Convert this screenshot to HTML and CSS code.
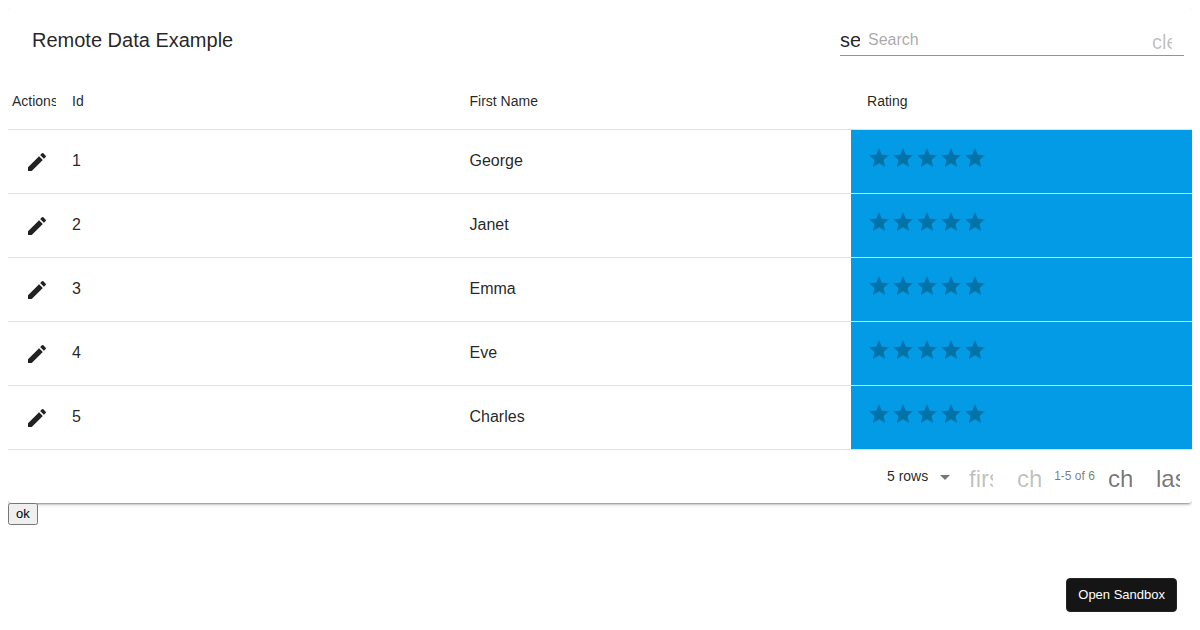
FILE: index.html
```
<!DOCTYPE html>
<html lang="en">
<head>
<meta charset="UTF-8" />
<meta name="viewport" content="width=device-width, initial-scale=1"/>
<title>Remote Data Example</title>
<link rel="stylesheet" href="styles.css">
</head>
<body>
  <!-- shared icons -->
  <svg class="sprite" aria-hidden="true">
    <symbol id="edit" viewBox="0 0 24 24">
      <path d="M3 17.25V21h3.75L17.81 9.94l-3.75-3.75L3 17.25zM20.71 7.04c.39-.39.39-1.02 0-1.41l-2.34-2.34a.9959.9959 0 0 0-1.41 0l-1.83 1.83 3.75 3.75 1.83-1.83z"/>
    </symbol>
    <symbol id="star" viewBox="0 0 24 24">
      <path d="M12 17.27L18.18 21l-1.64-7.03L22 9.24l-7.19-.61L12 2 9.19 8.63 2 9.24l5.46 4.73L5.82 21z"/>
    </symbol>
  </svg>

  <main class="paper">
    <div class="toolbar">
      <h1 class="title">Remote Data Example</h1>
      <div class="search">
        <span class="search-icon" aria-hidden="true">search</span>
        <input type="text" class="search-input" placeholder="Search" aria-label="Search">
        <button type="button" class="clear-btn" aria-label="Clear search" disabled><span class="clear-icon">clear</span></button>
      </div>
    </div>

    <table class="data-table">
      <colgroup>
        <col class="col-actions">
        <col>
        <col>
        <col class="col-rating">
      </colgroup>
      <thead>
        <tr>
          <th class="actions" scope="col">Actions</th>
          <th scope="col">Id</th>
          <th scope="col">First Name</th>
          <th scope="col">Rating</th>
        </tr>
      </thead>
      <tbody id="rows"></tbody>
    </table>

    <div class="pagination">
      <div class="rows-select">
        <select aria-label="Rows per page">
          <option>5 rows</option>
          <option>10 rows</option>
          <option>20 rows</option>
        </select>
        <svg class="arrow" viewBox="0 0 24 24" aria-hidden="true"><path d="M7 10l5 5 5-5z"/></svg>
      </div>
      <button type="button" class="page-btn" aria-label="First Page" disabled><span>first_page</span></button>
      <button type="button" class="page-btn" aria-label="Previous Page" disabled><span>chevron_left</span></button>
      <span class="page-info">1-5 of 6</span>
      <button type="button" class="page-btn" aria-label="Next Page"><span>chevron_right</span></button>
      <button type="button" class="page-btn" aria-label="Last Page"><span>last_page</span></button>
    </div>
  </main>
  <button type="button" class="ok-btn">ok</button>

  <a class="sandbox-link" href="#">Open Sandbox</a>

<script src="script.js"></script>
</body>
</html>
```
FILE: styles.css
```
* {
  box-sizing: border-box;
}
body {
  margin: 8px;
  background: #fff;
  font-family: "Liberation Sans", Helvetica, Arial, sans-serif;
  color: rgba(0, 0, 0, 0.87);
}
button, input, select {
  font-family: inherit;
}
.sprite {
  display: none;
}
.paper {
  border-radius: 4px;
  background: #fff;
  box-shadow:
    0 3px 1px -2px rgba(0, 0, 0, 0.2),
    0 2px 2px 0 rgba(0, 0, 0, 0.14),
    0 1px 5px 0 rgba(0, 0, 0, 0.12);
}

/* Toolbar */
.toolbar {
  display: flex;
  justify-content: space-between;
  align-items: center;
  height: 64px;
  padding: 0 8px 0 24px;
}
.title {
  margin: 0;
  font-size: 20px;
  line-height: 32px;
  font-weight: 400;
}
.search {
  display: flex;
  align-items: center;
  width: 344px;
  height: 32px;
  border-bottom: 1px solid rgba(0, 0, 0, 0.42);
}
.search-icon {
  width: 20px;
  margin-right: 8px;
  overflow: hidden;
  font-size: 20px;
  line-height: 24px;
}
.search-input {
  flex: 1;
  min-width: 0;
  padding: 0;
  border: none;
  outline: none;
  background: none;
  font-size: 16px;
  line-height: 24px;
  color: inherit;
}
.search-input::placeholder {
  color: rgba(0, 0, 0, 0.36);
}
.clear-btn {
  margin: 4px 0 0;
  padding: 0 12px;
  border: none;
  background: none;
  color: rgba(0, 0, 0, 0.26);
}
.clear-icon {
  display: block;
  width: 20px;
  overflow: hidden;
  font-size: 20px;
  line-height: 24px;
  text-align: left;
}

/* Table */
.data-table {
  width: 100%;
  table-layout: fixed;
  border-collapse: separate;
  border-spacing: 0;
}
.col-actions {
  width: 48px;
}
.col-rating {
  width: 28.8%;
}
th, td {
  border-bottom: 1px solid #e0e0e0;
  padding: 0 16px;
  text-align: left;
}
th {
  height: 58px;
  font-size: 14px;
  line-height: 24px;
  font-weight: 400;
}
td {
  height: 64px;
  padding-bottom: 2px;
  font-size: 16px;
  line-height: 24px;
}
th.actions {
  padding: 0 4px;
  overflow: hidden;
}
td.actions {
  padding: 0;
}
.edit-btn {
  display: block;
  margin: 0 5px;
  padding: 12px;
  border: none;
  background: none;
  color: inherit;
  cursor: pointer;
}
.edit-btn svg {
  display: block;
  width: 24px;
  height: 24px;
  fill: currentColor;
}
td.rating {
  padding-bottom: 8px;
  background: #039be5;
}
.stars {
  display: flex;
}
.stars svg {
  width: 24px;
  height: 24px;
  fill: rgba(0, 0, 0, 0.26);
}

/* Pagination */
.pagination {
  display: flex;
  justify-content: flex-end;
  align-items: center;
  height: 53px;
}
.rows-select {
  display: flex;
  align-items: center;
  position: relative;
}
.rows-select select {
  appearance: none;
  width: 70px;
  padding: 0 0 2px;
  border: none;
  background: none;
  font-size: 14px;
  line-height: 24px;
  color: inherit;
}
.arrow {
  position: absolute;
  right: 0;
  width: 24px;
  height: 24px;
  fill: rgba(0, 0, 0, 0.54);
  pointer-events: none;
}
.page-btn {
  padding: 4px 12px 0;
  border: none;
  background: none;
  color: rgba(0, 0, 0, 0.54);
  cursor: pointer;
}
.page-btn:disabled {
  color: rgba(0, 0, 0, 0.26);
  cursor: default;
}
.page-btn span {
  display: block;
  width: 24px;
  overflow: hidden;
  font-size: 24px;
  line-height: 32px;
  text-align: left;
}
.page-info {
  min-width: 43px;
  padding-bottom: 2px;
  font-size: 12px;
  line-height: 20px;
  text-align: center;
  color: rgba(0, 0, 0, 0.54);
}

.ok-btn {
  display: block;
  height: 22px;
  padding: 0 6px 2px;
  font-size: 13px;
}
.sandbox-link {
  position: fixed;
  right: 23px;
  bottom: 18px;
  padding: 0 11px;
  border: 1px solid #242424;
  border-radius: 4px;
  background: #151515;
  color: #fff;
  font-size: 13px;
  line-height: 32px;
  text-decoration: none;
}
```
FILE: script.js
```
const users = [
  { id: 1, firstName: 'George' },
  { id: 2, firstName: 'Janet' },
  { id: 3, firstName: 'Emma' },
  { id: 4, firstName: 'Eve' },
  { id: 5, firstName: 'Charles' }
];

const star = '<svg><use href="#star"/></svg>';

document.getElementById('rows').innerHTML = users.map(user => `
  <tr>
    <td class="actions">
      <button type="button" class="edit-btn" aria-label="Edit ${user.firstName}"><svg><use href="#edit"/></svg></button>
    </td>
    <td>${user.id}</td>
    <td>${user.firstName}</td>
    <td class="rating"><div class="stars" role="img" aria-label="5 stars">${star.repeat(5)}</div></td>
  </tr>`).join('');
```
